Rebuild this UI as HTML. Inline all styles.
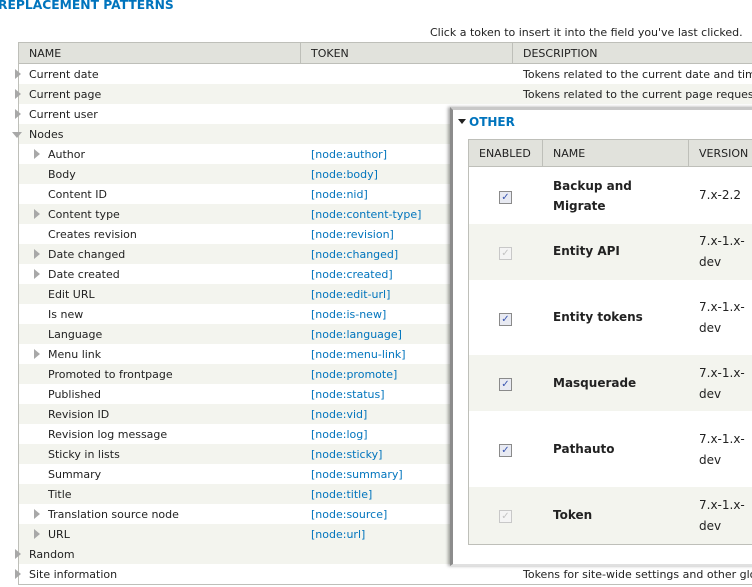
<!DOCTYPE html>
<html><head><style>
*{margin:0;padding:0;box-sizing:border-box}
body{width:752px;height:587px;overflow:hidden;background:#fff;font-family:"DejaVu Sans",Verdana,sans-serif;font-size:11px;color:#222;position:relative}
.a{position:absolute;white-space:nowrap}
.title{left:-2px;top:-2px;font-weight:bold;font-size:12.3px;color:#0074bd;letter-spacing:0}
.hdr{background:#e1e2dc;border:1px solid #bebfb9}
.row{position:absolute;left:19px;width:740px;height:20px;line-height:22px}
.g{background:#f3f4ee}
.tk{color:#0074bd}
.tri{position:absolute;width:0;height:0;border-top:5px solid transparent;border-bottom:5px solid transparent;border-left:6px solid #a8a8a8}
.trid{position:absolute;width:0;height:0;border-left:5px solid transparent;border-right:5px solid transparent;border-top:6px solid #a8a8a8}
.cb{position:absolute;width:13px;height:13px;border:1px solid #8a8a8a;background:#e8eaf2;color:#3a56b0;font-size:10px;line-height:11px;text-align:center}
.cb.d{border-color:#c8c8c8;background:#f4f4f4;color:#c4c4c4}
.p{font-size:12px}
.pb{font-size:12px;font-weight:bold}
</style></head><body>
<div class="a title">REPLACEMENT PATTERNS</div>
<div class="a" style="left:430px;top:26px">Click a token to insert it into the field you've last clicked.</div>
<div class="a hdr" style="left:18px;top:42px;width:740px;height:22px"></div>
<div class="a" style="left:300px;top:43px;width:1px;height:20px;background:#bebfb9"></div>
<div class="a" style="left:512px;top:43px;width:1px;height:20px;background:#bebfb9"></div>
<div class="a" style="left:29px;top:47px">NAME</div>
<div class="a" style="left:311px;top:47px">TOKEN</div>
<div class="a" style="left:523px;top:47px">DESCRIPTION</div>
<div class="a" style="left:18px;top:64px;width:1px;height:521px;background:#bebfb9"></div>
<div class="a" style="left:18px;top:584px;width:740px;height:1px;background:#bebfb9"></div>

<div class="row" style="top:64px"><span class="a" style="left:10px">Current date</span><span class="a" style="left:504px">Tokens related to the current date and time.</span></div>
<div class="row g" style="top:84px"><span class="a" style="left:10px">Current page</span><span class="a" style="left:504px">Tokens related to the current page request.</span></div>
<div class="row" style="top:104px"><span class="a" style="left:10px">Current user</span></div>
<div class="row g" style="top:124px"><span class="a" style="left:10px">Nodes</span></div>
<div class="row" style="top:144px"><span class="a" style="left:29px">Author</span><span class="a tk" style="left:292px">[node:author]</span></div>
<div class="row g" style="top:164px"><span class="a" style="left:29px">Body</span><span class="a tk" style="left:292px">[node:body]</span></div>
<div class="row" style="top:184px"><span class="a" style="left:29px">Content ID</span><span class="a tk" style="left:292px">[node:nid]</span></div>
<div class="row g" style="top:204px"><span class="a" style="left:29px">Content type</span><span class="a tk" style="left:292px">[node:content-type]</span></div>
<div class="row" style="top:224px"><span class="a" style="left:29px">Creates revision</span><span class="a tk" style="left:292px">[node:revision]</span></div>
<div class="row g" style="top:244px"><span class="a" style="left:29px">Date changed</span><span class="a tk" style="left:292px">[node:changed]</span></div>
<div class="row" style="top:264px"><span class="a" style="left:29px">Date created</span><span class="a tk" style="left:292px">[node:created]</span></div>
<div class="row g" style="top:284px"><span class="a" style="left:29px">Edit URL</span><span class="a tk" style="left:292px">[node:edit-url]</span></div>
<div class="row" style="top:304px"><span class="a" style="left:29px">Is new</span><span class="a tk" style="left:292px">[node:is-new]</span></div>
<div class="row g" style="top:324px"><span class="a" style="left:29px">Language</span><span class="a tk" style="left:292px">[node:language]</span></div>
<div class="row" style="top:344px"><span class="a" style="left:29px">Menu link</span><span class="a tk" style="left:292px">[node:menu-link]</span></div>
<div class="row g" style="top:364px"><span class="a" style="left:29px">Promoted to frontpage</span><span class="a tk" style="left:292px">[node:promote]</span></div>
<div class="row" style="top:384px"><span class="a" style="left:29px">Published</span><span class="a tk" style="left:292px">[node:status]</span></div>
<div class="row g" style="top:404px"><span class="a" style="left:29px">Revision ID</span><span class="a tk" style="left:292px">[node:vid]</span></div>
<div class="row" style="top:424px"><span class="a" style="left:29px">Revision log message</span><span class="a tk" style="left:292px">[node:log]</span></div>
<div class="row g" style="top:444px"><span class="a" style="left:29px">Sticky in lists</span><span class="a tk" style="left:292px">[node:sticky]</span></div>
<div class="row" style="top:464px"><span class="a" style="left:29px">Summary</span><span class="a tk" style="left:292px">[node:summary]</span></div>
<div class="row g" style="top:484px"><span class="a" style="left:29px">Title</span><span class="a tk" style="left:292px">[node:title]</span></div>
<div class="row" style="top:504px"><span class="a" style="left:29px">Translation source node</span><span class="a tk" style="left:292px">[node:source]</span></div>
<div class="row g" style="top:524px"><span class="a" style="left:29px">URL</span><span class="a tk" style="left:292px">[node:url]</span></div>
<div class="row g" style="top:544px"><span class="a" style="left:10px">Random</span></div>
<div class="row" style="top:564px"><span class="a" style="left:10px">Site information</span><span class="a" style="left:504px">Tokens for site-wide settings and other global</span></div>

<div class="tri" style="left:15px;top:69px"></div>
<div class="tri" style="left:15px;top:89px"></div>
<div class="tri" style="left:15px;top:109px"></div>
<div class="trid" style="left:12px;top:132px"></div>
<div class="tri" style="left:34px;top:149px"></div>
<div class="tri" style="left:34px;top:209px"></div>
<div class="tri" style="left:34px;top:249px"></div>
<div class="tri" style="left:34px;top:269px"></div>
<div class="tri" style="left:34px;top:349px"></div>
<div class="tri" style="left:34px;top:509px"></div>
<div class="tri" style="left:34px;top:529px"></div>
<div class="tri" style="left:15px;top:549px"></div>
<div class="tri" style="left:15px;top:569px"></div>

<!-- overlay panel -->
<div class="a" style="left:450px;top:107px;width:310px;height:459px;background:#fff;border-left:3px solid #8c8c8c;border-top:3px solid #c8c8c8;border-bottom:2px solid #e0e0e0;box-shadow:-2px 0 3px rgba(0,0,0,.35)"></div>
<div class="a" style="left:458px;top:119px;width:0;height:0;border-left:4px solid transparent;border-right:4px solid transparent;border-top:5px solid #222"></div>
<div class="a" style="left:469px;top:115px;font-weight:bold;font-size:12px;color:#0074bd">OTHER</div>
<div class="a" style="left:468px;top:139px;width:300px;height:406px;border:1px solid #bebfb9;background:#fff"></div>
<div class="a" style="left:469px;top:140px;width:300px;height:27px;background:#e1e2dc;border-bottom:1px solid #bebfb9"></div>
<div class="a" style="left:542px;top:140px;width:1px;height:27px;background:#bebfb9"></div>
<div class="a" style="left:688px;top:140px;width:1px;height:27px;background:#bebfb9"></div>
<div class="a" style="left:479px;top:147px">ENABLED</div>
<div class="a" style="left:553px;top:147px">NAME</div>
<div class="a" style="left:699px;top:147px">VERSION</div>
<div class="a g" style="left:469px;top:224px;width:300px;height:56px"></div>
<div class="a g" style="left:469px;top:355px;width:300px;height:56px"></div>
<div class="a g" style="left:469px;top:487px;width:300px;height:57px"></div>

<div class="cb" style="left:499px;top:191px">✓</div>
<div class="cb d" style="left:499px;top:247px">✓</div>
<div class="cb" style="left:499px;top:313px">✓</div>
<div class="cb" style="left:499px;top:378px">✓</div>
<div class="cb" style="left:499px;top:444px">✓</div>
<div class="cb d" style="left:499px;top:510px">✓</div>

<div class="a pb" style="left:553px;top:176px;line-height:20px">Backup and<br>Migrate</div>
<div class="a pb" style="left:553px;top:244px">Entity API</div>
<div class="a pb" style="left:553px;top:310px">Entity tokens</div>
<div class="a pb" style="left:553px;top:376px">Masquerade</div>
<div class="a pb" style="left:553px;top:442px">Pathauto</div>
<div class="a pb" style="left:553px;top:508px">Token</div>

<div class="a p" style="left:699px;top:188px">7.x-2.2</div>
<div class="a p" style="left:699px;top:231px;line-height:21px">7.x-1.x-<br>dev</div>
<div class="a p" style="left:699px;top:297px;line-height:21px">7.x-1.x-<br>dev</div>
<div class="a p" style="left:699px;top:363px;line-height:21px">7.x-1.x-<br>dev</div>
<div class="a p" style="left:699px;top:429px;line-height:21px">7.x-1.x-<br>dev</div>
<div class="a p" style="left:699px;top:495px;line-height:21px">7.x-1.x-<br>dev</div>
</body></html>
